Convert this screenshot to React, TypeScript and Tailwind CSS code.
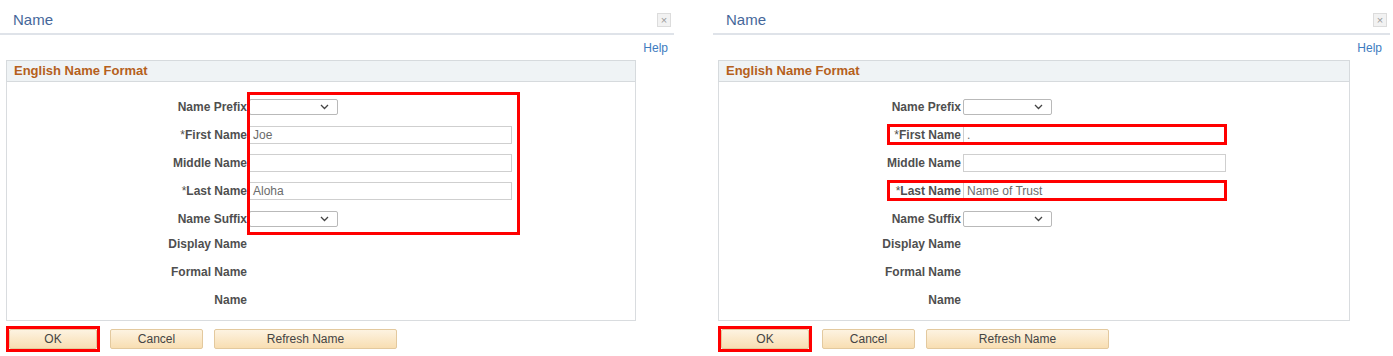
import React from "react";

type Row = { label: string; req?: boolean; kind: "select" | "text" | "none"; value?: string; mark?: boolean };

const font = { fontFamily: '"Liberation Sans", Arial, sans-serif' };

export default function App() {
  const left: Row[] = [
    { label: "Name Prefix", kind: "select" },
    { label: "First Name", req: true, kind: "text", value: "Joe" },
    { label: "Middle Name", kind: "text" },
    { label: "Last Name", req: true, kind: "text", value: "Aloha" },
    { label: "Name Suffix", kind: "select" },
  ];
  const right: Row[] = [
    { label: "Name Prefix", kind: "select" },
    { label: "First Name", req: true, kind: "text", value: ".", mark: true },
    { label: "Middle Name", kind: "text" },
    { label: "Last Name", req: true, kind: "text", value: "Name of Trust", mark: true },
    { label: "Name Suffix", kind: "select" },
  ];

  return (
    <div className="flex h-[356px] w-[1393px] bg-white" style={font}>
      <Panel
        width="w-[674px]"
        boxX="ml-[6px] w-[630px]"
        labelW="w-[242px]"
        helpPr="pr-[6px]"
        rows={left}
        boxAround
      />
      <div className="ml-[39px]">
        <Panel
          width="w-[677px]"
          boxX="ml-[5px] w-[632px]"
          labelW="w-[244px]"
          helpPr="pr-[8px]"
          rows={right}
        />
      </div>
    </div>
  );
}

function Panel({
  width,
  boxX,
  labelW,
  helpPr,
  rows,
  boxAround,
}: {
  width: string;
  boxX: string;
  labelW: string;
  helpPr: string;
  rows: Row[];
  boxAround?: boolean;
}) {
  return (
    <div className={`${width} flex flex-col`}>
      {/* title bar */}
      <div className="flex h-[35px] items-start justify-between border-b-2 border-[#dfe3e9]">
        <span className="pl-[13px] pt-[11px] text-[15px] leading-[18px] text-[#45679a]">Name</span>
        <span className="mr-[3px] mt-[13px] flex h-[14px] w-[14px] items-center justify-center border border-[#dcdcdc] bg-[#f2f2f2] text-[11px] leading-none text-[#9a9a9a]">
          ×
        </span>
      </div>

      <div className={`flex h-[25px] items-center justify-end ${helpPr} text-[12px] text-[#3d7cc0]`}>Help</div>

      {/* group box */}
      <div className={`${boxX} flex flex-col`}>
        <div className="flex h-[22px] items-center border border-[#d6dadd] bg-[#eff3f5] pl-[7px] text-[13px] font-bold text-[#b5601c]">
          English Name Format
        </div>
        <div className="flex flex-col border border-t-0 border-[#d9dcdf] pb-[6px] pt-[11px]">
          <div className="relative">
            {rows.map((r) => (
              <FieldRow key={r.label} row={r} labelW={labelW} />
            ))}
            {boxAround && (
              <div className="pointer-events-none absolute left-[240px] top-[-1px] h-[143px] w-[273px] border-[3px] border-[#ff0000]" />
            )}
          </div>
          <div className="-mt-[3px] flex flex-col">
            {["Display Name", "Formal Name", "Name"].map((l) => (
              <div key={l} className="flex h-[28px] items-center">
                <span className={`${labelW} pr-[2px] text-right text-[12px] font-bold text-[#4f4f4f]`}>{l}</span>
              </div>
            ))}
          </div>
        </div>
      </div>

      {/* buttons */}
      <div className={`${boxX} mt-[5px] flex items-center`}>
        <div className="border-[3px] border-[#ff0000]">
          <Btn w="w-[88px]">OK</Btn>
        </div>
        <div className="ml-[10px]">
          <Btn w="w-[93px]">Cancel</Btn>
        </div>
        <div className="ml-[11px]">
          <Btn w="w-[183px]">Refresh Name</Btn>
        </div>
      </div>
    </div>
  );
}

function FieldRow({ row, labelW }: { row: Row; labelW: string }) {
  return (
    <div className="relative flex h-[28px] items-center">
      <span className={`${labelW} pr-[2px] text-right text-[12px] text-[#4f4f4f]`}>
        {row.req && <span className="font-normal">*</span>}
        <span className="font-bold">{row.label}</span>
      </span>
      {row.kind === "select" && (
        <div className="flex h-[16px] w-[89px] items-center justify-end rounded-[2px] border border-[#b9b9b9] bg-white pr-[8px]">
          <svg width={9} height={6} viewBox="0 0 9 6">
            <path d="M1 1l3.5 3.5L8 1" stroke="#444" strokeWidth={1.3} fill="none" />
          </svg>
        </div>
      )}
      {row.kind === "text" && (
        <div className="flex h-[18px] w-[263px] items-center border border-[#cfcfcf] bg-white pl-[3px] text-[12px] text-[#6b6b6b]">
          {row.value}
        </div>
      )}
      {row.mark && (
        <div className="pointer-events-none absolute left-[168px] top-[3px] h-[21px] w-[340px] border-[3px] border-[#ff0000]" />
      )}
    </div>
  );
}

function Btn({ w, children }: { w: string; children: React.ReactNode }) {
  return (
    <div
      className={`${w} flex h-[20px] items-center justify-center rounded-[2px] border border-[#e3c99e] bg-gradient-to-b from-[#fdf3e1] to-[#f8deb2] text-[12px] text-[#444]`}
    >
      {children}
    </div>
  );
}
